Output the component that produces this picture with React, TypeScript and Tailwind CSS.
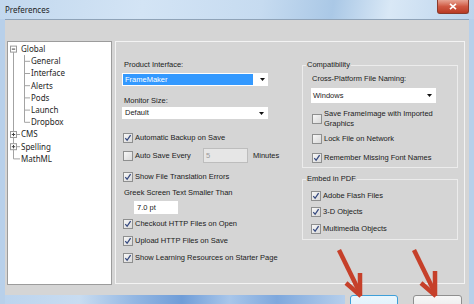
import React from 'react';

const treeRows: { label: string; depth: number }[] = [
  { label: 'Global', depth: 0 },
  { label: 'General', depth: 1 },
  { label: 'Interface', depth: 1 },
  { label: 'Alerts', depth: 1 },
  { label: 'Pods', depth: 1 },
  { label: 'Launch', depth: 1 },
  { label: 'Dropbox', depth: 1 },
  { label: 'CMS', depth: 0 },
  { label: 'Spelling', depth: 0 },
  { label: 'MathML', depth: 0 },
];

const rowY = (k: number) => 7.1 + 12.2 * k;

const Check = ({ checked }: { checked?: boolean }) => (
  <span className="flex h-[10px] w-[10px] shrink-0 items-center justify-center border border-[#8e8f8f] bg-linear-to-br from-[#f7f7f7] to-[#d9d9d9]">
    {checked && (
      <svg width="8" height="8" viewBox="0 0 8 8">
        <path d="M1.3 4.2 L3.1 6.3 L6.6 1.2" fill="none" stroke="#34487e" strokeWidth="1.3" />
      </svg>
    )}
  </span>
);

const CheckRow = ({ label, checked, className }: { label: string; checked?: boolean; className: string }) => (
  <div className={className}>
    <Check checked={checked} />
    <span className="ml-[2px] whitespace-nowrap">{label}</span>
  </div>
);

const Caret = ({ className }: { className: string }) => (
  <svg className={className} width="5" height="3" viewBox="0 0 5 3">
    <path d="M0 0 H5 L2.5 3 Z" fill="#111" />
  </svg>
);

const TreeLines = () => (
  <svg className="absolute left-0 top-0" width="40" height="130" viewBox="0 0 40 130">
    <g stroke="#a3a3a3" strokeWidth="1" fill="none">
      <path d={`M5.5 ${rowY(0) + 3} V${rowY(9)} H12`} />
      <path d={`M16.5 ${rowY(0) + 6} V${rowY(6)}`} />
      {[1, 2, 3, 4, 5, 6].map((k) => (
        <path key={k} d={`M16.5 ${rowY(k)} H22`} />
      ))}
      <path d={`M8.5 ${rowY(7)} H12 M8.5 ${rowY(8)} H12`} />
    </g>
    {[0, 7, 8].map((k) => (
      <g key={k}>
        <rect x="2.5" y={rowY(k) - 3} width="6" height="6" fill="#fff" stroke="#9a9a9a" />
        <path d={`M3.8 ${rowY(k)} H7.2`} stroke="#444" />
        {k !== 0 && <path d={`M5.5 ${rowY(k) - 1.7} V${rowY(k) + 1.7}`} stroke="#444" />}
      </g>
    ))}
  </svg>
);

export default function App() {
  return (
    <div className="relative h-[304px] w-[474px] overflow-hidden bg-[#b8d0ea] font-['Liberation_Sans',Arial,sans-serif] text-[7.5px] text-[#1b1b1b]">
      {/* title bar */}
      <div className="flex h-[19px] items-start justify-between bg-[linear-gradient(100deg,#c2d8ee_0%,#d3e4f5_30%,#c6dbf0_55%,#aac8e6_70%,#d9e8f6_82%,#bcd4ec_100%)]">
        <span className="ml-[5px] mt-[4px] font-['Noto_Sans',sans-serif] text-[8px] leading-[11px] text-[#1e1e1e]">Preferences</span>
        <div className="mr-[5px] flex h-[14px] w-[32px] items-center justify-center rounded-b-[3px] border border-t-0 border-[#8a3a2b] bg-linear-to-b from-[#e6a393] via-[#cf5842] to-[#b93a24]">
          <svg width="8" height="7" viewBox="0 0 8 7">
            <path d="M1 0.8 L7 6.2 M7 0.8 L1 6.2" stroke="#fff" strokeWidth="1.6" />
          </svg>
        </div>
      </div>

      {/* dialog body */}
      <div className="mx-[5px] flex h-[285px] flex-col border-t border-[#8fa3b8] bg-[#d5d5d5]">
        <div className="mt-[21px] flex gap-[3px] pl-[2px]">
          {/* tree */}
          <div className="h-[244px] w-[105px] border border-[#9c9c9c] bg-white">
            <div className="relative flex flex-col pt-[1px] font-['Noto_Sans',sans-serif] text-[8px] text-[#1e1e1e]">
              <TreeLines />
              {treeRows.map((r) => (
                <div
                  key={r.label}
                  className={r.depth ? 'flex h-[12.2px] items-center pl-[23px]' : 'flex h-[12.2px] items-center pl-[13px]'}
                >
                  {r.label}
                </div>
              ))}
            </div>
          </div>

          {/* settings panel */}
          <div className="flex h-[243px] w-[350px] border border-[#f3f3f3]">
            {/* left column */}
            <div className="flex w-[186px] flex-col pt-[17px]">
              <div className="ml-[8px] h-[12px] leading-[12px]">Product Interface:</div>
              <div className="ml-[6px] mt-[2px] flex h-[13px] w-[146px] items-center bg-white">
                <span className="ml-px flex h-[11px] flex-1 items-center bg-[#3399ff] pl-[2px] text-white">FrameMaker</span>
                <Caret className="ml-[7px] mr-[3px]" />
              </div>
              <div className="ml-[8px] mt-[9px] h-[12px] leading-[12px]">Monitor Size:</div>
              <div className="ml-[6px] flex h-[12px] w-[146px] items-center bg-white">
                <span className="flex-1 pl-[3px]">Default</span>
                <Caret className="mr-[4px]" />
              </div>
              <CheckRow className="ml-[7px] mt-[12px] flex h-[14px] items-center" label="Automatic Backup on Save" checked />
              <div className="ml-[7px] mt-[3px] flex h-[15px] items-center">
                <Check />
                <span className="ml-[2px] w-[68px] whitespace-nowrap">Auto Save Every</span>
                <div className="flex h-[15px] w-[45px] items-center border border-[#bdbdbd] bg-[#e6e6e6] pl-[2px] text-[#9a9a9a]">5</div>
                <span className="ml-[5px]">Minutes</span>
              </div>
              <CheckRow className="ml-[7px] mt-[7px] flex h-[14px] items-center" label="Show File Translation Errors" checked />
              <div className="ml-[8px] mt-[3px] h-[12px] leading-[12px]">Greek Screen Text Smaller Than</div>
              <div className="ml-[18px] mt-[2px] flex h-[13px] w-[44px] items-center bg-white pl-[3px]">7.0 pt</div>
              <CheckRow className="ml-[7px] mt-[3px] flex h-[14px] items-center" label="Checkout HTTP Files on Open" checked />
              <CheckRow className="ml-[7px] mt-[3px] flex h-[14px] items-center" label="Upload HTTP Files on Save" checked />
              <CheckRow className="ml-[7px] mt-[3px] flex h-[14px] items-center" label="Show Learning Resources on Starter Page" checked />
            </div>

            {/* right column */}
            <div className="flex w-[156px] flex-col pt-[17px]">
              <fieldset className="flex flex-col border border-[#ececec] pb-[2px]">
                <legend className="ml-[3px] h-[12px] px-[1px] leading-[12px]">Compatibility</legend>
                <div className="ml-[9px] mt-[2px] h-[12px] leading-[12px]">Cross-Platform File Naming:</div>
                <div className="ml-[8px] mt-[3px] flex h-[15px] w-[125px] items-center bg-white">
                  <span className="flex-1 pl-[2px]">Windows</span>
                  <Caret className="mr-[4px]" />
                </div>
                <div className="ml-[9px] mt-[6px] flex h-[20px] items-center">
                  <Check />
                  <span className="ml-[2px] leading-[10px]">
                    Save FrameImage with Imported
                    <br />
                    Graphics
                  </span>
                </div>
                <CheckRow className="ml-[9px] mt-[3px] flex h-[14px] items-center" label="Lock File on Network" />
                <CheckRow className="ml-[9px] mt-[5px] flex h-[14px] items-center" label="Remember Missing Font Names" checked />
              </fieldset>
              <fieldset className="mt-[5px] flex flex-col border border-[#ececec] pb-[3px]">
                <legend className="ml-[3px] h-[12px] px-[1px] leading-[12px]">Embed in PDF</legend>
                <CheckRow className="ml-[8px] mt-[4px] flex h-[14px] items-center" label="Adobe Flash Files" checked />
                <CheckRow className="ml-[8px] mt-[2px] flex h-[14px] items-center" label="3-D Objects" checked />
                <CheckRow className="ml-[8px] mt-[3px] flex h-[14px] items-center" label="Multimedia Objects" checked />
              </fieldset>
            </div>
          </div>
        </div>

        {/* bottom strip with buttons */}
        <div className="mt-auto flex h-[9px] items-start">
          <div className="h-full w-[340px] bg-[linear-gradient(90deg,#bcd4ee_0%,#c8dcf1_22%,#93b7e3_38%,#6f9dd8_52%,#a8c6ea_66%,#7ea8dd_80%,#b6cfec_100%)]" />
          <div className="ml-[5px] h-[22px] w-[48px] shrink-0 rounded-[3px] border border-[#3d9fd9] bg-linear-to-b from-[#eaf6fd] to-[#d9f0fc]" />
          <div className="ml-[15px] h-[22px] w-[49px] shrink-0 rounded-[3px] border border-[#8f8f8f] bg-linear-to-b from-[#f7f7f7] to-[#e5e5e5]" />
        </div>
      </div>

      {/* annotation arrows */}
      <svg className="pointer-events-none absolute left-0 top-0" width="474" height="304" viewBox="0 0 474 304">
        <g stroke="#c6402a" strokeWidth="4.5" fill="none" strokeLinecap="butt" strokeLinejoin="miter">
          <path d="M339 250 L360 293" />
          <path d="M360 273 V296 M346 283 L361 296" />
          <path d="M414 250 L435 293" />
          <path d="M435 271 V296 M421 283 L436 296" />
        </g>
      </svg>
    </div>
  );
}
